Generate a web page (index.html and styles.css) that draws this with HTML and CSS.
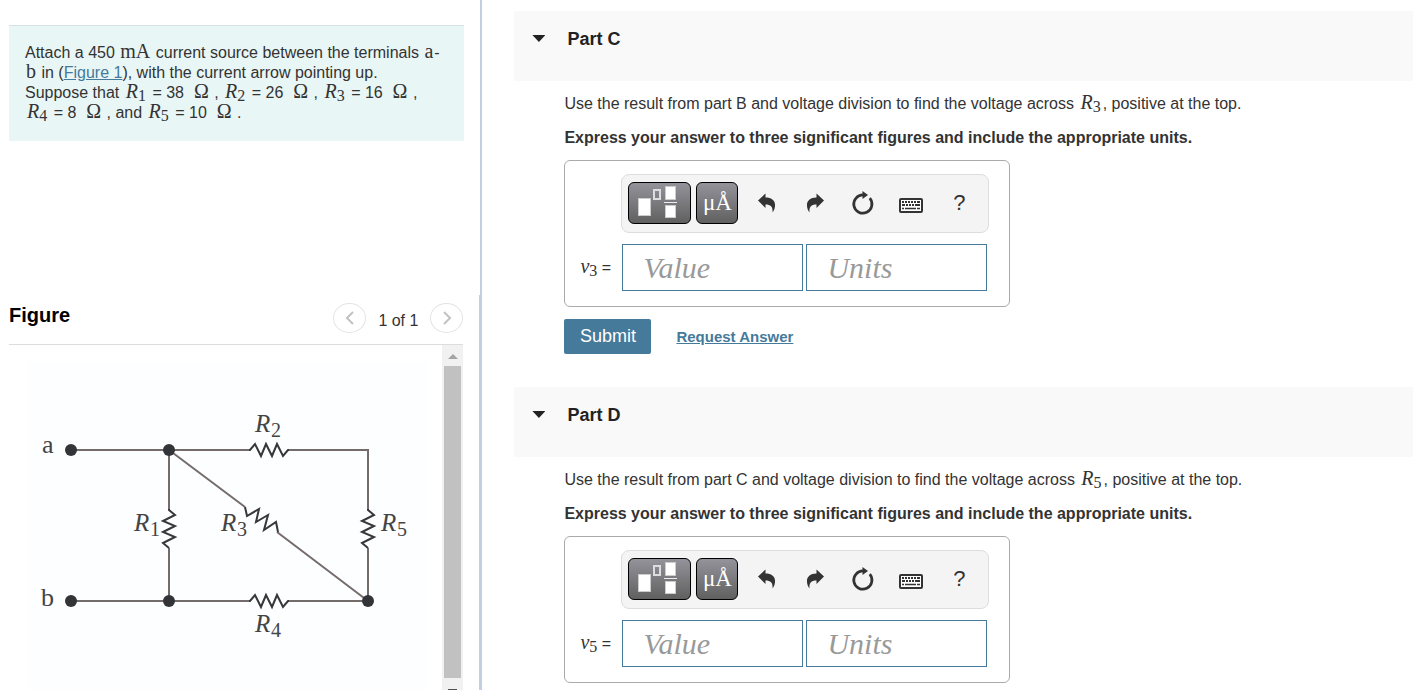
FILE: index.html
```html
<!DOCTYPE html>
<html lang="en">
<head>
    <meta charset="UTF-8">
    <meta name="viewport" content="width=device-width, initial-scale=1.0">
    <title>Circuit Problem</title>
    <link rel="stylesheet" href="styles.css">
</head>
<body>
    <!-- shared toolbar icons -->
    <svg class="sprite" aria-hidden="true">
        <symbol id="icon-template" viewBox="0 0 61 40">
            <rect x="9.5" y="15.5" width="12" height="17" fill="#fff" stroke="#ccc"/>
            <rect x="25" y="7" width="6" height="9" fill="none" stroke="#ddd" stroke-width="2"/>
            <rect x="36.5" y="3.5" width="10" height="13" fill="#fff" stroke="#ccc"/>
            <path d="M35 19.5h13" stroke="#eee"/>
            <rect x="36.5" y="22.5" width="10" height="12" fill="#fff" stroke="#ccc"/>
        </symbol>
        <symbol id="icon-undo" viewBox="0 0 20 22">
            <path d="M1 8.5 8.500 1.500V5.500C14.500 5.500 18.500 8.500 18 14c-.2 2.500-1 4.500-2.500 6.500.5-5.500-1.500-8-7-8v3.500z" fill="#333"/>
        </symbol>
        <symbol id="icon-reset" viewBox="0 0 24 26">
            <path d="M18.800 8.200A9.100 9.100 0 1 1 12.500 5" fill="none" stroke="#333" stroke-width="2.700"/>
            <path d="M11.500 1l5.500 4-5.500 4z" fill="#333"/>
        </symbol>
        <symbol id="icon-keyboard" viewBox="0 0 24 15">
            <rect x="1" y="1" width="22" height="13" rx="1" fill="#fff" stroke="#333" stroke-width="2"/>
            <path d="M3 4h2M6 4h2M9 4h2M12 4h2M15 4h2M18 4h3M3 7h3M7 7h2M10 7h2M13 7h2M16 7h5" stroke="#333" stroke-width="2"/>
            <path d="M3 10.500h2M6 10.500h11M18 10.500h3" stroke="#333" stroke-width="1.500"/>
        </symbol>
    </svg>

    <div class="page">
        <aside class="sidebar">
            <section class="intro">
                <p class="prompt">Attach a 450 <span class="math">mA</span> current source between the terminals <span class="math">a</span>-<br><span class="math">b</span> in (<a href="#figure">Figure 1</a>), with the current arrow pointing up.<br>Suppose that <i class="math">R<sub>1</sub></i> = 38 &nbsp;<span class="math">Ω</span>&nbsp;, <i class="math">R<sub>2</sub></i> = 26 &nbsp;<span class="math">Ω</span>&nbsp;, <i class="math">R<sub>3</sub></i> = 16 &nbsp;<span class="math">Ω</span>&nbsp;,<br><i class="math">R<sub>4</sub></i> = 8 &nbsp;<span class="math">Ω</span>&nbsp;, and <i class="math">R<sub>5</sub></i> = 10 &nbsp;<span class="math">Ω</span>&nbsp;.</p>
            </section>

            <section class="figure" id="figure">
                <header class="figure-header">
                    <h2>Figure</h2>
                    <div class="pager">
                        <button type="button" aria-label="Previous figure"><svg width="10" height="14" viewBox="0 0 10 14"><path d="M8 1 2 7l6 6" fill="none" stroke="#c2c2c2" stroke-width="2"/></svg></button>
                        <span>1 of 1</span>
                        <button type="button" aria-label="Next figure"><svg width="10" height="14" viewBox="0 0 10 14"><path d="M2 1l6 6-6 6" fill="none" stroke="#c2c2c2" stroke-width="2"/></svg></button>
                    </div>
                </header>
                <div class="figure-pane">
                    <div class="figure-view">
                        <svg class="circuit" viewBox="0 0 400 328" width="400" height="328" role="img" aria-label="Circuit with resistors R1 to R5">
                            <g class="wire">
                                <path d="M44 88H222M262 88H341V147M341 186V239"/>
                                <path d="M44 239H222M262 239H341"/>
                                <path d="M142 88V147M142 186V239"/>
                                <path d="M142 88 218 145M250 170 341 239"/>
                            </g>
                            <g class="resistor">
                                <path d="M222 88h1l5-6 6 12 5-12 6 12 5-12 6 12 5-6h1"/>
                                <path d="M222 239h1l5-6 6 12 5-12 6 12 5-12 6 12 5-6h1"/>
                                <path d="M142 147v1l6 5-12 6 12 5-12 6 12 5-12 6 6 5"/>
                                <path d="M341 147v1l6 5-12 6 12 5-12 6 12 5-12 6 6 5"/>
                                <path d="M218 145 220 154 232 147 229 160 241 153 237 168 249 160 251 170"/>
                            </g>
                            <g class="node">
                                <circle cx="44" cy="88" r="6"/>
                                <circle cx="142" cy="88" r="6"/>
                                <circle cx="44" cy="239" r="6"/>
                                <circle cx="142" cy="239" r="6"/>
                                <circle cx="341" cy="239" r="6"/>
                            </g>
                            <g class="terminal">
                                <text x="15" y="91">a</text>
                                <text x="14" y="244">b</text>
                            </g>
                            <g class="name">
                                <text x="107" y="169">R</text>
                                <text x="228" y="70">R</text>
                                <text x="194" y="169">R</text>
                                <text x="228" y="270">R</text>
                                <text x="354" y="169">R</text>
                            </g>
                            <g class="index">
                                <text x="123" y="174">1</text>
                                <text x="244" y="75">2</text>
                                <text x="210" y="174">3</text>
                                <text x="244" y="275">4</text>
                                <text x="370" y="174">5</text>
                            </g>
                        </svg>
                    </div>
                    <div class="scrollbar" aria-hidden="true">
                        <span class="arrow-up"></span>
                        <span class="thumb"></span>
                        <span class="arrow-down"></span>
                    </div>
                </div>
            </section>
        </aside>

        <main class="parts">
            <section class="part">
                <header class="part-header">
                    <button type="button" class="toggle" aria-label="Collapse Part C"></button>
                    <h2>Part C</h2>
                </header>
                <form class="part-body">
                    <p class="question">Use the result from part B and voltage division to find the voltage across <i class="math">R<sub>3</sub></i>, positive at the top.</p>
                    <p class="instruction">Express your answer to three significant figures and include the appropriate units.</p>
                    <div class="answer">
                        <div class="toolbar">
                            <button type="button" class="dark wide" aria-label="Templates"><svg width="61" height="40"><use href="#icon-template"/></svg></button>
                            <button type="button" class="dark">μÅ</button>
                            <button type="button" class="tool" aria-label="Undo"><svg width="20" height="22"><use href="#icon-undo"/></svg></button>
                            <button type="button" class="tool" aria-label="Redo"><svg class="flip" width="20" height="22"><use href="#icon-undo"/></svg></button>
                            <button type="button" class="tool" aria-label="Reset"><svg width="24" height="26"><use href="#icon-reset"/></svg></button>
                            <button type="button" class="tool keyboard" aria-label="Keyboard shortcuts"><svg width="24" height="15"><use href="#icon-keyboard"/></svg></button>
                            <button type="button" class="tool">?</button>
                        </div>
                        <label for="value-c"><i class="math">v<sub>3</sub></i> =</label>
                        <div class="fields">
                            <input type="text" id="value-c" placeholder="Value">
                            <input type="text" placeholder="Units" aria-label="Units">
                        </div>
                    </div>
                    <div class="actions">
                        <button type="submit" class="submit">Submit</button>
                        <a href="#answer-c">Request Answer</a>
                    </div>
                </form>
            </section>

            <section class="part">
                <header class="part-header">
                    <button type="button" class="toggle" aria-label="Collapse Part D"></button>
                    <h2>Part D</h2>
                </header>
                <form class="part-body">
                    <p class="question">Use the result from part C and voltage division to find the voltage across <i class="math">R<sub>5</sub></i>, positive at the top.</p>
                    <p class="instruction">Express your answer to three significant figures and include the appropriate units.</p>
                    <div class="answer">
                        <div class="toolbar">
                            <button type="button" class="dark wide" aria-label="Templates"><svg width="61" height="40"><use href="#icon-template"/></svg></button>
                            <button type="button" class="dark">μÅ</button>
                            <button type="button" class="tool" aria-label="Undo"><svg width="20" height="22"><use href="#icon-undo"/></svg></button>
                            <button type="button" class="tool" aria-label="Redo"><svg class="flip" width="20" height="22"><use href="#icon-undo"/></svg></button>
                            <button type="button" class="tool" aria-label="Reset"><svg width="24" height="26"><use href="#icon-reset"/></svg></button>
                            <button type="button" class="tool keyboard" aria-label="Keyboard shortcuts"><svg width="24" height="15"><use href="#icon-keyboard"/></svg></button>
                            <button type="button" class="tool">?</button>
                        </div>
                        <label for="value-d"><i class="math">v<sub>5</sub></i> =</label>
                        <div class="fields">
                            <input type="text" id="value-d" placeholder="Value">
                            <input type="text" placeholder="Units" aria-label="Units">
                        </div>
                    </div>
                </form>
            </section>
        </main>
    </div>
</body>
</html>
```
FILE: styles.css
```css
* {
    box-sizing: border-box;
}
body {
    margin: 0;
    font-family: "Liberation Sans", Arial, sans-serif;
    font-size: 16px;
    line-height: 20px;
    color: #333;
    background: #fff;
}
h2, p {
    margin: 0;
}
button {
    font-family: inherit;
    padding: 0;
    cursor: pointer;
}
svg {
    display: block;
}
a {
    color: #457a9b;
}
.sprite {
    display: none;
}
.page {
    display: flex;
    height: 100vh;
}
.math {
    padding: 0 1px;
    font-family: "Liberation Serif", "Times New Roman", serif;
    font-size: 20px;
    line-height: 0;
}
i.math {
    padding: 0 2px;
}
.math sub {
    font-size: 16px;
    font-style: normal;
    vertical-align: -3px;
}

/* left column */
.sidebar {
    flex: none;
    width: calc(34% + 2px);
    display: flex;
    flex-direction: column;
}
.intro {
    min-height: 295px;
    padding: 25px 16px 0 9px;
    border-right: 2px solid #c2cfe0;
}
.prompt {
    padding: 17px 16px 18px;
    border-top: 1px solid #d5e3e2;
    background: #e9f6f6;
}
.figure {
    flex: 1;
    min-height: 0;
    display: flex;
    flex-direction: column;
    padding: 0 16px 0 9px;
    border-right: 3px solid #c2cfe0;
}
.figure-header {
    display: flex;
    justify-content: space-between;
    padding: 8px 0 11px;
    border-bottom: 1px solid #ddd;
}
.figure-header h2 {
    font-size: 20px;
    line-height: 24px;
    color: #000;
}
.pager {
    display: flex;
    gap: 12px;
}
.pager span {
    padding-top: 8px;
}
.pager button {
    display: flex;
    align-items: center;
    justify-content: center;
    width: 33px;
    height: 30px;
    border: 1px solid #e3e3e3;
    border-radius: 50%;
    background: #fff;
}
.figure-pane {
    flex: 1;
    min-height: 0;
    display: flex;
}
.figure-view {
    flex: 1;
    min-width: 0;
    padding: 17px 0 0 18px;
    overflow: hidden;
}
.circuit {
    background: #fcfeff;
}
.wire {
    fill: none;
    stroke: #746c6a;
    stroke-width: 2;
}
.resistor {
    fill: none;
    stroke: #38383a;
    stroke-width: 2;
}
.node {
    fill: #333438;
}
.circuit text {
    font-family: "Liberation Serif", "Times New Roman", serif;
    fill: #444;
}
.terminal {
    font-size: 26px;
}
.name {
    font-size: 25px;
    font-style: italic;
}
.index {
    font-size: 20px;
}
.scrollbar {
    display: flex;
    flex-direction: column;
    align-items: center;
    width: 21px;
    background: #f1f1f1;
}
.arrow-up {
    margin: 9px 0 7px;
    border: 5px solid transparent;
    border-top: 0;
    border-bottom-color: #a3a3a3;
}
.thumb {
    flex: 1;
    width: 17px;
    background: #c1c1c1;
}
.arrow-down {
    width: 9px;
    height: 1px;
    margin-top: 11px;
    background: #505050;
}

/* right column */
.parts {
    flex: 1;
    min-width: 0;
    padding: 11px 0 0 32px;
}
.part {
    margin-bottom: 33px;
}
.part:last-child {
    margin-bottom: 0;
}
.part-header {
    display: flex;
    gap: 22px;
    height: 70px;
    padding: 18px;
    background: #f9f9f9;
}
.part-header h2 {
    font-size: 18px;
    color: #222;
}
.toggle {
    width: 13px;
    height: 7px;
    margin-top: 6px;
    border: 0;
    background: #222;
    clip-path: polygon(0 0, 100% 0, 50% 100%);
}
.part-body {
    padding: 13px 0 0 50px;
}
.question {
    margin-bottom: 14px;
}
.instruction {
    margin-bottom: 12px;
    font-weight: bold;
}
.answer {
    display: grid;
    grid-template-columns: 41px 1fr;
    row-gap: 11px;
    align-items: center;
    max-width: 446px;
    padding: 13px 20px 15px 15px;
    border: 1px solid #aaa;
    border-radius: 6px;
}
.toolbar {
    grid-column: 2;
    display: flex;
    align-items: center;
    height: 59px;
    padding: 0 0 2px 6px;
    border: 1px solid #ddd;
    border-radius: 8px;
    background: #f4f4f4;
}
.dark {
    display: flex;
    align-items: center;
    justify-content: center;
    flex: none;
    width: 42px;
    height: 42px;
    margin-right: 5px;
    border: 1px solid #000;
    border-radius: 6px;
    background: linear-gradient(#94939b, #606060);
    color: #fff;
    font-family: "Liberation Serif", "Times New Roman", serif;
    font-size: 23px;
}
.dark.wide {
    width: 63px;
}
.tool {
    flex: none;
    display: flex;
    align-items: center;
    justify-content: center;
    width: 48px;
    height: 42px;
    border: 0;
    background: none;
    color: #333;
    font-size: 22px;
}
.keyboard {
    padding-top: 5px;
}
.flip {
    transform: scaleX(-1);
}
.answer label {
    white-space: nowrap;
}
.answer label .math {
    padding: 0;
}
.fields {
    display: grid;
    grid-template-columns: 1fr 1fr;
    gap: 3px;
    padding: 0 2px 0 1px;
}
.fields input {
    min-width: 0;
    height: 47px;
    padding: 0 20px;
    border: 1px solid #457a9b;
    font-family: "Liberation Serif", "Times New Roman", serif;
    font-size: 30px;
}
.fields input::placeholder {
    color: #999;
    font-style: italic;
}
.actions {
    display: flex;
    align-items: center;
    gap: 25px;
    margin-top: 12px;
}
.actions a {
    font-size: 15px;
    font-weight: bold;
}
.submit {
    width: 87px;
    height: 35px;
    border: 0;
    border-radius: 2px;
    background: #457a9b;
    color: #fff;
    font-size: 18px;
}
```
